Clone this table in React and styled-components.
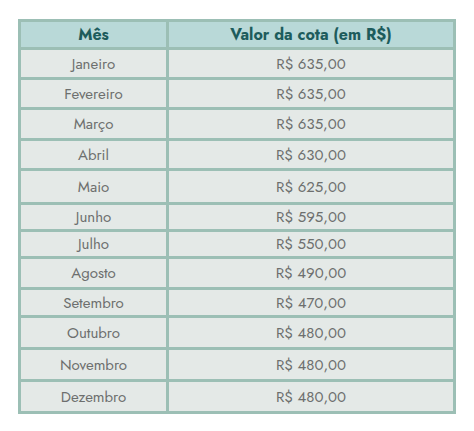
import React from 'react';
import styled, { createGlobalStyle } from 'styled-components';

// Page reset
const GlobalStyle = createGlobalStyle`
    html, body {
        margin: 0;
        padding: 0;
        background: #ffffff;
    }
`;

const Page = styled.div`
    padding: 19px 0 0 18px;
    font-family: 'Jost', 'Lato', 'Noto Sans', sans-serif;
`;

const Table = styled.table`
    width: 438px;
    border-collapse: collapse;
    border: 3px solid #9cbfb5;
    table-layout: fixed;
`;

const HeadCell = styled.th`
    background-color: #b9d9d8;
    color: #1d5c5c;
    font-weight: 700;
    font-size: 16px;
    text-align: center;
    padding: 0;
    border: 3px solid #9cbfb5;
    width: ${(p) => p.$width || 'auto'};
`;

const Cell = styled.td`
    background-color: #e4e9e7;
    color: #6d6f6e;
    font-size: 15px;
    font-weight: 400;
    text-align: center;
    padding: 0;
    border: 3px solid #9cbfb5;
`;

const Row = styled.tr`
    height: ${(p) => p.$h}px;
`;

const rows = [
    ['Janeiro', 'R$ 635,00', 30],
    ['Fevereiro', 'R$ 635,00', 30],
    ['Março', 'R$ 635,00', 31],
    ['Abril', 'R$ 630,00', 30],
    ['Maio', 'R$ 625,00', 34],
    ['Junho', 'R$ 595,00', 27],
    ['Julho', 'R$ 550,00', 27],
    ['Agosto', 'R$ 490,00', 31],
    ['Setembro', 'R$ 470,00', 28],
    ['Outubro', 'R$ 480,00', 32],
    ['Novembro', 'R$ 480,00', 32],
    ['Dezembro', 'R$ 480,00', 32],
];

const App = () => {
    return (
        <Page>
            <GlobalStyle />
            <Table>
                <thead>
                    <Row $h={28}>
                        <HeadCell $width="145px">Mês</HeadCell>
                        <HeadCell>Valor da cota (em R$)</HeadCell>
                    </Row>
                </thead>
                <tbody>
                    {rows.map(([month, value, h]) => (
                        <Row key={month} $h={h}>
                            <Cell>{month}</Cell>
                            <Cell>{value}</Cell>
                        </Row>
                    ))}
                </tbody>
            </Table>
        </Page>
    );
};

export default App;
